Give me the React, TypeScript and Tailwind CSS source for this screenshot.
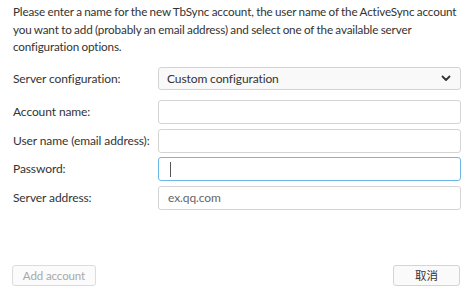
export default function App() {
  const font = { fontFamily: 'Lato, "Noto Sans CJK SC", sans-serif' };
  return (
    <div
      className="w-[474px] h-[297px] bg-white flex flex-col px-[13px] text-[#333333] text-[12px] tracking-[-0.1px]"
      style={font}
    >
      <p className="pt-[3px] leading-[17.5px] whitespace-nowrap text-[11.7px] tracking-[-0.15px] [word-spacing:-0.4px]">
        Please enter a name for the new TbSync account, the user name of the ActiveSync account
        <br />
        you want to add (probably an email address) and select one of the available server
        <br />
        configuration options.
      </p>
      <div className="mt-[11.5px] grid grid-cols-[145px_1fr] items-center w-[448px]">
        <div className="leading-[23px]">Server configuration:</div>
        <div className="h-[23px] rounded-[3px] border border-[#d4d4d4] bg-[#f9f9f9] flex items-center justify-between pl-[8px] pr-[9px]">
          <span>Custom configuration</span>
          <svg width="10" height="7" viewBox="0 0 10 7" fill="none">
            <path d="M1.5 1.5 L5 5 L8.5 1.5" stroke="#333" strokeWidth="1.8" strokeLinecap="round" strokeLinejoin="round" />
          </svg>
        </div>
      </div>
      <div className="mt-[10px] grid grid-cols-[145px_1fr] items-center gap-y-[4.7px] w-[448px]">
        <div>Account name:</div>
        <div className="h-[24px] rounded-[3px] border border-[#d4d4d4] bg-white" />
        <div>User name (email address):</div>
        <div className="h-[24px] rounded-[3px] border border-[#d4d4d4] bg-white" />
        <div>Password:</div>
        <div className="h-[24px] rounded-[3px] border border-[#6cb8e6] bg-white flex items-center pl-[11px]">
          <div className="w-[1px] h-[15px] bg-[#555555]" />
        </div>
        <div>Server address:</div>
        <div className="h-[24px] rounded-[3px] border border-[#d4d4d4] bg-white flex items-center pl-[9px] text-[#666666]">
          ex.qq.com
        </div>
      </div>
      <div className="flex-1" />
      <div className="flex justify-between items-center pb-[11px] pr-[1px] -ml-[1px]">
        <button className="h-[21px] w-[84px] rounded-[3px] border border-[#dcdcdc] bg-[#fbfbfb] text-[#a8a8a8] text-[11.5px]">
          Add account
        </button>
        <button className="h-[21px] w-[67px] rounded-[3px] border border-[#d4d4d4] bg-[#fafafa] text-[#333333] text-[11.5px]">
          取消
        </button>
      </div>
    </div>
  );
}
